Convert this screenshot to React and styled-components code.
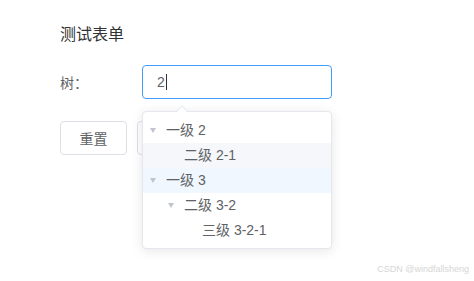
import React from 'react'
import styled, { createGlobalStyle } from 'styled-components'

const GlobalStyle = createGlobalStyle`
  body {
    margin: 0;
    background: #fff;
    font-family: "Noto Sans CJK SC", "Noto Sans", sans-serif;
  }
`

const Page = styled.div`
  position: relative;
  width: 474px;
  height: 281px;
  padding: 22px 0 0 60px;
  box-sizing: border-box;
  overflow: hidden;
`

const Title = styled.div`
  font-size: 16px;
  line-height: 22px;
  color: #303133;
`

const FormRow = styled.div`
  display: flex;
  align-items: center;
  margin-top: 21px;
  position: relative;
`

const Label = styled.div`
  width: 82px;
  font-size: 14px;
  color: #606266;
`

const InputBox = styled.div`
  width: 190px;
  height: 34px;
  box-sizing: border-box;
  border: 1px solid #409eff;
  border-radius: 4px;
  display: flex;
  align-items: center;
  padding-left: 14px;
  font-size: 14px;
  color: #606266;
  font-family: "Liberation Sans", sans-serif;
`

const Caret = styled.span`
  display: inline-block;
  width: 1px;
  height: 16px;
  background: #303133;
  margin-left: 1px;
`

const Buttons = styled.div`
  display: flex;
  gap: 10px;
  margin-top: 22px;
`

const Button = styled.div`
  width: 67px;
  height: 34px;
  box-sizing: border-box;
  border: 1px solid #dcdfe6;
  border-radius: 4px;
  display: flex;
  align-items: center;
  justify-content: center;
  font-size: 14px;
  color: #606266;
`

const Dropdown = styled.div`
  position: absolute;
  left: 82px;
  top: 46px;
  width: 190px;
  box-sizing: border-box;
  background: #fff;
  border: 1px solid #e4e7ed;
  border-radius: 4px;
  box-shadow: 0 2px 12px rgba(0, 0, 0, 0.1);
  padding: 6px 0 5px;
  z-index: 2;

  &::before {
    content: "";
    position: absolute;
    left: 33px;
    top: -7px;
    width: 0;
    height: 0;
    border-left: 6px solid transparent;
    border-right: 6px solid transparent;
    border-bottom: 6px solid #ebeef5;
  }
  &::after {
    content: "";
    position: absolute;
    left: 34px;
    top: -5px;
    width: 0;
    height: 0;
    border-left: 5px solid transparent;
    border-right: 5px solid transparent;
    border-bottom: 5px solid #fff;
  }
`

const Node = styled.div`
  display: flex;
  align-items: center;
  height: 25px;
  padding-left: ${p => 3 + p.$level * 18}px;
  background: ${p => (p.$current ? '#f0f7ff' : p.$hover ? '#f5f7fa' : 'transparent')};
  font-size: 14px;
  line-height: 25px;
  color: #606266;
`

const Expand = styled.span`
  width: 14px;
  margin-right: 6px;
  display: flex;
  align-items: center;
  justify-content: center;
`

const Arrow = styled.span`
  width: 0;
  height: 0;
  border-left: 3.5px solid transparent;
  border-right: 3.5px solid transparent;
  border-top: 5px solid ${p => (p.$show ? '#c0c4cc' : 'transparent')};
`

const NodeText = styled.span`
  font-family: "Liberation Sans", "Noto Sans CJK SC", sans-serif;
  white-space: pre;
`

const Watermark = styled.div`
  position: absolute;
  right: 5px;
  bottom: 7px;
  font-size: 9px;
  color: #d6d6d6;
  font-family: "Liberation Sans", sans-serif;
`

const nodes = [
  { level: 0, label: '一级 2', arrow: true },
  { level: 1, label: '二级 2-1', hover: true },
  { level: 0, label: '一级 3', arrow: true, current: true },
  { level: 1, label: '二级 3-2', arrow: true },
  { level: 2, label: '三级 3-2-1' },
]

export default function App() {
  return (
    <Page>
      <GlobalStyle />
      <Title>测试表单</Title>
      <FormRow>
        <Label>树：</Label>
        <InputBox>
          2<Caret />
        </InputBox>
        <Dropdown>
          {nodes.map((n, i) => (
            <Node key={i} $level={n.level} $hover={n.hover} $current={n.current}>
              <Expand>
                <Arrow $show={n.arrow} />
              </Expand>
              <NodeText>{n.label}</NodeText>
            </Node>
          ))}
        </Dropdown>
      </FormRow>
      <Buttons>
        <Button>重置</Button>
        {/* second button sits under the dropdown, only its edge shows */}
        <Button />
      </Buttons>
      <Watermark>CSDN @windfallsheng</Watermark>
    </Page>
  )
}
